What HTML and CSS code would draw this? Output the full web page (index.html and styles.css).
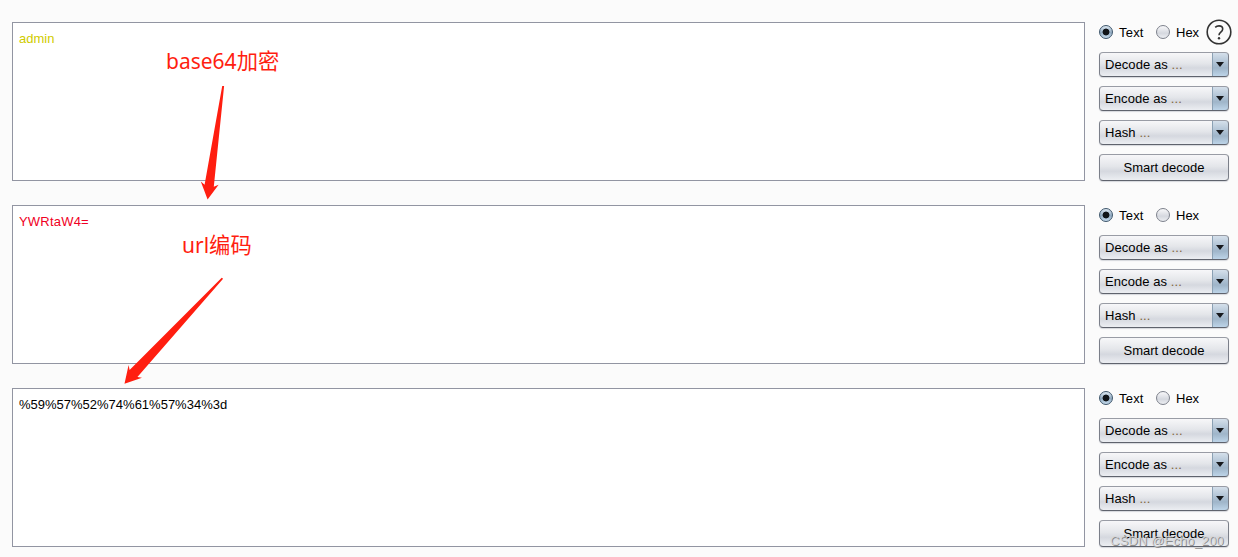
FILE: index.html
```html
<!DOCTYPE html>
<html lang="zh">
<head>
<meta charset="utf-8">
<title>Decoder</title>
<link rel="stylesheet" href="styles.css">
</head>
<body>
<main class="decoder">
  <section class="stage">
    <div class="editor yellow">admin</div>
    <div class="controls">
      <div class="modes">
        <span class="radio on"></span><span class="mode text">Text</span><span class="radio"></span><span class="mode">Hex</span>
        <svg class="help" width="26" height="26" viewBox="0 0 26 26"><circle cx="13" cy="13" r="11.8"/><path d="M9.2 8.4C10.2 7.4 11.4 6.9 13 6.9c2.3 0 3.7 1.2 3.7 3.1 0 3.2-3.7 3.1-3.7 6.2"/><circle class="dot" cx="13" cy="19.2" r="1.2"/></svg>
      </div>
      <div class="select"><span>Decode as <i>...</i></span><b></b></div>
      <div class="select"><span>Encode as <i>...</i></span><b></b></div>
      <div class="select"><span>Hash <i>...</i></span><b></b></div>
      <div class="button">Smart decode</div>
    </div>
  </section>
  <section class="stage">
    <div class="editor red">YWRtaW4=</div>
    <div class="controls">
      <div class="modes">
        <span class="radio on"></span><span class="mode text">Text</span><span class="radio"></span><span class="mode">Hex</span>
      </div>
      <div class="select"><span>Decode as <i>...</i></span><b></b></div>
      <div class="select"><span>Encode as <i>...</i></span><b></b></div>
      <div class="select"><span>Hash <i>...</i></span><b></b></div>
      <div class="button">Smart decode</div>
    </div>
  </section>
  <section class="stage">
    <div class="editor">%59%57%52%74%61%57%34%3d</div>
    <div class="controls">
      <div class="modes">
        <span class="radio on"></span><span class="mode text">Text</span><span class="radio"></span><span class="mode">Hex</span>
      </div>
      <div class="select"><span>Decode as <i>...</i></span><b></b></div>
      <div class="select"><span>Encode as <i>...</i></span><b></b></div>
      <div class="select"><span>Hash <i>...</i></span><b></b></div>
      <div class="button">Smart decode</div>
    </div>
  </section>
</main>
<svg class="arrows" width="300" height="400" viewBox="0 0 300 400">
  <path d="M222.2 86h1.9L213.8 186.8l4.8-2L207.6 199.5 200.8 181.5l3.8 3.2z"/>
  <path d="M221.7 277.8l1.4 1L137.4 377l4.6.7L124.5 383.7 128.6 365l1 5z"/>
</svg>
<div class="note first">base64<span>加密</span></div>
<div class="note second">url<span>编码</span></div>
<div class="watermark">CSDN @Echo_200</div>
</body>
</html>
```
FILE: styles.css
```css
* { box-sizing: border-box; }
body {
  margin: 0;
  width: 1238px;
  height: 557px;
  overflow: hidden;
  position: relative;
  background: #fbfbfb;
  color: #000;
  font: 13px/16px "Liberation Sans", Arial, sans-serif;
}
.decoder {
  display: flex;
  flex-direction: column;
  gap: 24px;
  padding: 22px 0 0 12px;
}
.stage { display: flex; gap: 14px; height: 159px; }
.editor {
  width: 1073px;
  padding: 8px 6px;
  border: 1px solid #9295a2;
  background: #fff;
}
.yellow { color: #cfcb00; }
.red { color: #f00024; letter-spacing: 0.2px; }
.controls { width: 133px; }
.modes {
  display: flex;
  align-items: center;
  height: 20px;
  margin-bottom: 10px;
}
.radio {
  flex: none;
  width: 14px;
  height: 14px;
  border: 1px solid #7d818c;
  border-radius: 50%;
  background: linear-gradient(#f8f8fa, #d5d8df 60%, #eceef2);
}
.radio.on {
  border-color: #3e566b;
  background: radial-gradient(circle, #101418 0 3px, transparent 3.8px), linear-gradient(#dde8f2, #90a9bf 55%, #c6dcee);
}
.mode { margin-left: 6px; padding-top: 1px; }
.mode.text { width: 38px; margin-left: 5px; padding-left: 1px; letter-spacing: 0.2px; }
.help { flex: none; margin-left: 6.5px; fill: none; stroke: #333; stroke-width: 1.6; }
.help .dot { fill: #333; stroke: none; }
.select, .button {
  width: 130px;
  border: 1px solid #80848e;
  border-color: #999ca5 #7b7f89 #5f636d;
  border-radius: 4px;
  background: linear-gradient(#f7f7f9, #e4e6ea 45%, #d5d8df 65%, #eceef2);
  box-shadow: 0 1px 1px #d5d7dc;
}
.select {
  display: flex;
  justify-content: space-between;
  height: 25px;
  margin-bottom: 9px;
  padding-left: 5px;
  line-height: 24px;
  letter-spacing: 0.08px;
  overflow: hidden;
}
.select i { font-style: normal; color: #81663c; }
.select b {
  display: flex;
  align-items: center;
  justify-content: center;
  width: 17px;
  margin: -1px -1px -1px 0;
  border: 1px solid #56718b;
  border-left-color: #8ba1b4;
  border-top-color: #7c91a5;
  border-radius: 0 4px 4px 0;
  background: linear-gradient(#d5e0eb, #a9bdd0 50%, #9fb5c9 65%, #bdd4e8);
}
.select b::after {
  content: "";
  margin-right: 1px;
  border: 4px solid transparent;
  border-top: 5px solid #16181c;
  border-bottom: 0;
}
.button {
  height: 27px;
  line-height: 26px;
  text-align: center;
}
.arrows { position: absolute; left: 0; top: 0; fill: #ff1e10; }
.note {
  position: absolute;
  color: #ff1e10;
  font: 21px/30px "Noto Sans", "Noto Sans CJK SC", sans-serif;
  white-space: nowrap;
}
.note span { font-family: "Noto Sans CJK SC", sans-serif; font-size: 21.3px; font-weight: 400; }
.first { left: 166px; top: 45px; }
.second { left: 182px; top: 229px; }
.watermark {
  position: absolute;
  left: 1110px;
  top: 533px;
  color: rgba(215, 215, 215, 0.85);
  font-size: 13px;
  letter-spacing: 0.1px;
  text-shadow: 1px 1px 0 rgba(110, 110, 110, 0.75);
  white-space: nowrap;
}
```
